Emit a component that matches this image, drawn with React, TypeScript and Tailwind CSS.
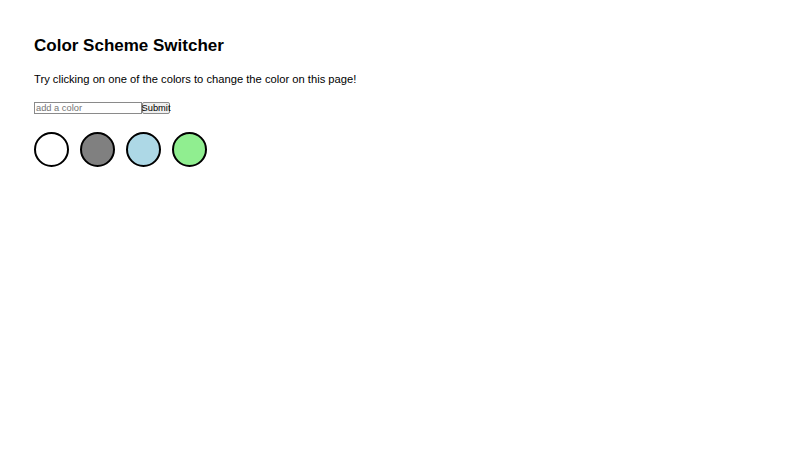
import React, { useState } from 'react';

const App: React.FC = () => {
    const [colors, setColors] = useState<string[]>(['#ffffff', '#808080', '#add8e6', '#90ee90']);
    const [value, setValue] = useState('');
    const [bg, setBg] = useState('#ffffff');

    const addColor = (e: React.FormEvent) => {
        e.preventDefault();
        if (value.trim()) setColors([...colors, value.trim()]);
        setValue('');
    };

    return (
        <div
            className="w-[800px] h-[450px] px-[34px] pt-[36px] text-black font-['Liberation_Sans',Arial,sans-serif]"
            style={{ backgroundColor: bg }}
        >
            <h2 className="text-[17px] font-bold leading-[20px]">Color Scheme Switcher</h2>
            <p className="mt-[17px] text-[11.2px] leading-[13px]">
                Try clicking on one of the colors to change the color on this page!
            </p>
            <form onSubmit={addColor} className="mt-[16px] flex items-center h-[12px]">
                <input
                    value={value}
                    onChange={e => setValue(e.target.value)}
                    placeholder="add a color"
                    className="w-[108px] h-[12px] border border-[#8a8a8a] px-[1px] text-[9.3px] leading-[10px] placeholder:text-[#757575] outline-none"
                />
                <button
                    type="submit"
                    className="w-[28px] h-[12px] border border-[#8a8a8a] bg-[#efefef] text-[9.3px] leading-[10px] rounded-[2px] flex items-center justify-center"
                >
                    Submit
                </button>
            </form>
            <div className="mt-[18px] flex gap-[11px]">
                {colors.map(c => (
                    <button
                        key={c}
                        onClick={() => setBg(c)}
                        className="w-[35px] h-[35px] rounded-full border-2 border-black"
                        style={{ backgroundColor: c }}
                    />
                ))}
            </div>
        </div>
    );
};

export default App;
